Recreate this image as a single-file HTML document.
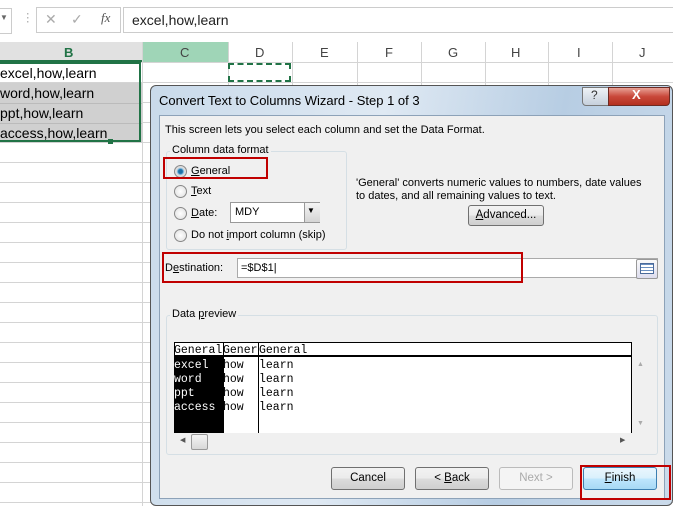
<!DOCTYPE html><html><head><style>
body{margin:0;width:673px;height:506px;overflow:hidden;background:#fff;font-family:"Liberation Sans",sans-serif;position:relative}
.a{position:absolute}
.t{font-size:11.5px;color:#000;white-space:nowrap}
.btn{position:absolute;height:21px;border:1px solid #707070;border-radius:3px;background:linear-gradient(#f2f2f2,#ebebeb 50%,#dcdcdc 51%,#cfcfcf);font-size:11.5px;text-align:center;line-height:21px}
.rad{position:absolute;width:11px;height:11px;border:1px solid #888;border-radius:50%;background:radial-gradient(#fff,#ddd)}
.mono{font-family:"Liberation Mono",monospace;font-size:11.5px;line-height:14px;white-space:pre}
.red{position:absolute;border:2px solid #c00000}
</style></head><body>
<div class="a" style="left:0;top:0;width:673px;height:40px;background:#fff"></div>
<div class="a" style="left:-2px;top:8px;width:12px;height:24px;border:1px solid #ccc;background:#fff"></div>
<div class="a t" style="left:0;top:13px;font-size:8px;color:#666">▼</div>
<div class="a t" style="left:22px;top:10px;color:#aaa">⋮</div>
<div class="a" style="left:36px;top:7px;width:83px;height:24px;border:1px solid #ccc"></div>
<div class="a t" style="left:45px;top:11px;color:#aaa;font-size:14px">✕</div>
<div class="a t" style="left:71px;top:11px;color:#aaa;font-size:14px">✓</div>
<div class="a t" style="left:101px;top:10px;color:#555;font-family:'Liberation Serif',serif;font-style:italic;font-size:13px">fx</div>
<div class="a" style="left:123px;top:7px;width:560px;height:24px;border:1px solid #ccc"></div>
<div class="a t" style="left:132px;top:12px;font-size:14px;color:#222">excel,how,learn</div>
<div class="a" style="left:0;top:42px;width:673px;height:20px;background:#fff;border-bottom:1px solid #d4d4d4"></div>
<div class="a" style="left:0;top:42px;width:142px;height:20px;background:#e1e1e1;border-bottom:2px solid #217346;box-sizing:border-box"></div>
<div class="a" style="left:142px;top:42px;width:86px;height:20px;background:#9fd5b7"></div>
<div class="a t" style="left:64px;top:45px;font-size:13px;font-weight:bold;color:#217346">B</div>
<div class="a t" style="left:180px;top:45px;font-size:13px;color:#444">C</div>
<div class="a t" style="left:255px;top:45px;font-size:13px;color:#444">D</div>
<div class="a t" style="left:320px;top:45px;font-size:13px;color:#444">E</div>
<div class="a t" style="left:385px;top:45px;font-size:13px;color:#444">F</div>
<div class="a t" style="left:448px;top:45px;font-size:13px;color:#444">G</div>
<div class="a t" style="left:511px;top:45px;font-size:13px;color:#444">H</div>
<div class="a t" style="left:577px;top:45px;font-size:13px;color:#444">I</div>
<div class="a t" style="left:639px;top:45px;font-size:13px;color:#444">J</div>
<svg class="a" style="left:0;top:42px" width="673" height="464">
<g stroke="#d4d4d4">
<line x1="142.5" y1="0" x2="142.5" y2="464"/><line x1="228.5" y1="0" x2="228.5" y2="464"/><line x1="292.5" y1="0" x2="292.5" y2="464"/><line x1="357.5" y1="0" x2="357.5" y2="464"/><line x1="421.5" y1="0" x2="421.5" y2="464"/><line x1="485.5" y1="0" x2="485.5" y2="464"/><line x1="548.5" y1="0" x2="548.5" y2="464"/><line x1="612.5" y1="0" x2="612.5" y2="464"/>
<line x1="0" y1="40.5" x2="673" y2="40.5"/><line x1="0" y1="60.5" x2="673" y2="60.5"/><line x1="0" y1="80.5" x2="673" y2="80.5"/><line x1="0" y1="100.5" x2="673" y2="100.5"/><line x1="0" y1="120.5" x2="673" y2="120.5"/><line x1="0" y1="140.5" x2="673" y2="140.5"/><line x1="0" y1="160.5" x2="673" y2="160.5"/><line x1="0" y1="180.5" x2="673" y2="180.5"/><line x1="0" y1="200.5" x2="673" y2="200.5"/><line x1="0" y1="220.5" x2="673" y2="220.5"/><line x1="0" y1="240.5" x2="673" y2="240.5"/><line x1="0" y1="260.5" x2="673" y2="260.5"/><line x1="0" y1="280.5" x2="673" y2="280.5"/><line x1="0" y1="300.5" x2="673" y2="300.5"/><line x1="0" y1="320.5" x2="673" y2="320.5"/><line x1="0" y1="340.5" x2="673" y2="340.5"/><line x1="0" y1="360.5" x2="673" y2="360.5"/><line x1="0" y1="380.5" x2="673" y2="380.5"/><line x1="0" y1="400.5" x2="673" y2="400.5"/><line x1="0" y1="420.5" x2="673" y2="420.5"/><line x1="0" y1="440.5" x2="673" y2="440.5"/><line x1="0" y1="460.5" x2="673" y2="460.5"/>
</g></svg>
<div class="a" style="left:0;top:83px;width:142px;height:60px;background:#d0d0d0"></div>
<div class="a" style="left:0;top:102.5px;width:142px;height:1px;background:#bbb"></div>
<div class="a" style="left:0;top:122.5px;width:142px;height:1px;background:#bbb"></div>
<div class="a" style="left:-2px;top:62px;width:143px;height:80px;border:2px solid #217346;box-sizing:border-box"></div>
<div class="a" style="left:108px;top:139px;width:5px;height:5px;background:#217346"></div>
<div class="a t" style="left:0;top:65px;font-size:14px">excel,how,learn</div>
<div class="a t" style="left:0;top:85px;font-size:14px">word,how,learn</div>
<div class="a t" style="left:0;top:105px;font-size:14px">ppt,how,learn</div>
<div class="a t" style="left:0;top:125px;font-size:14px">access,how,learn</div>
<div class="a" style="left:228px;top:63px;width:63px;height:19px;border:2px dashed #217346;box-sizing:border-box"></div>
<div class="a" style="left:150px;top:85px;width:523px;height:421px;border:1px solid #555;border-radius:6px;box-sizing:border-box;background:linear-gradient(100deg,#c9daea,#dfe9f3 40%,#b7cde3 70%,#cbdbeb)"></div>
<div class="a t" style="left:159px;top:93px;font-size:13px">Convert Text to Columns Wizard - Step 1 of 3</div>
<div class="a" style="left:582px;top:87px;width:26px;height:17px;border:1px solid #777;border-radius:0 0 0 4px;background:linear-gradient(#eef2f6,#c6d0dc)"></div>
<div class="a t" style="left:591px;top:88px;font-size:12px;color:#333">?</div>
<div class="a" style="left:608px;top:87px;width:60px;height:17px;border:1px solid #6d2a22;border-radius:0 0 4px 0;background:linear-gradient(#e8a195,#c9483a 50%,#b3301f)"></div>
<div class="a t" style="left:632px;top:87px;font-size:13px;font-weight:bold;color:#fff">X</div>
<div class="a" style="left:159px;top:115px;width:506px;height:384px;background:#f0f0f0;border:1px solid #8da2b8;box-sizing:border-box"></div>
<div class="a t" style="left:165px;top:124px;font-size:11px">This screen lets you select each column and set the Data Format.</div>
<div class="a" style="left:166px;top:151px;width:179px;height:97px;border:1px solid #d5dfe5;border-radius:3px"></div>
<div class="a t" style="left:170px;top:144px;font-size:11px;background:#f0f0f0;padding:0 2px">Column data format</div>
<div class="rad" style="left:174px;top:165px;background:radial-gradient(#1d6fa5 2px,#7ab8df 3px,#ddd 4px)"></div><div class="a t" style="left:191px;top:165px;font-size:11px"><u>G</u>eneral</div>
<div class="rad" style="left:174px;top:185px"></div><div class="a t" style="left:191px;top:185px;font-size:11px"><u>T</u>ext</div>
<div class="rad" style="left:174px;top:207px"></div><div class="a t" style="left:191px;top:207px;font-size:11px"><u>D</u>ate:</div>
<div class="a" style="left:230px;top:202px;width:90px;height:21px;border:1px solid #999;background:#fff;box-sizing:border-box"></div>
<div class="a t" style="left:235px;top:206px;font-size:11px">MDY</div>
<div class="a" style="left:304px;top:203px;width:15px;height:19px;background:linear-gradient(#f4f4f4,#d5d5d5);border-left:1px solid #999"></div>
<div class="a t" style="left:307px;top:206px;font-size:8px">▼</div>
<div class="rad" style="left:174px;top:229px"></div><div class="a t" style="left:191px;top:229px;font-size:11px">Do not <u>i</u>mport column (skip)</div>
<div class="red" style="left:163px;top:157px;width:101px;height:18px"></div>
<div class="a t" style="left:356px;top:177px;font-size:11px;line-height:13px">'General' converts numeric values to numbers, date values<br>to dates, and all remaining values to text.</div>
<div class="btn" style="left:468px;top:205px;width:74px;height:19px;line-height:19px"><u>A</u>dvanced...</div>
<div class="a t" style="left:165px;top:262px;font-size:11px">D<u>e</u>stination:</div>
<div class="a" style="left:237px;top:258px;width:421px;height:20px;border:1px solid #aaa;background:#fff;box-sizing:border-box"></div>
<div class="a t" style="left:241px;top:262px;font-size:11px">=$D$1|</div>
<div class="a" style="left:636px;top:259px;width:20px;height:18px;border:1px solid #999;border-radius:2px;background:linear-gradient(#fafafa,#dde)"></div>
<div class="a" style="left:640px;top:263px;width:12px;height:9px;background:repeating-linear-gradient(#6a8fc0 0 1px,#fff 1px 3px);border:1px solid #4a6a9a"></div>
<div class="red" style="left:162px;top:252px;width:357px;height:27px"></div>
<div class="a" style="left:166px;top:315px;width:490px;height:138px;border:1px solid #d5dfe5;border-radius:3px"></div>
<div class="a t" style="left:170px;top:308px;font-size:11px;background:#f0f0f0;padding:0 2px">Data <u>p</u>review</div>
<div class="a" style="left:174px;top:342px;width:458px;height:91px;background:#fff;border:1px solid #000;border-bottom:none;box-sizing:border-box"></div>
<div class="a" style="left:174px;top:342px;width:49px;height:91px;background:#000"></div>
<div class="a" style="left:174px;top:342px;width:458px;height:15px;background:#fff;border:1px solid #000;border-bottom:2px solid #000;box-sizing:border-box"></div>
<div class="a" style="left:222.5px;top:342px;width:1px;height:91px;background:#000"></div>
<div class="a" style="left:258px;top:342px;width:1px;height:91px;background:#000"></div>
<div class="a mono" style="left:174px;top:344px">General</div>
<div class="a mono" style="left:223px;top:344px;width:35px;overflow:hidden">General</div>
<div class="a mono" style="left:259px;top:344px">General</div>
<div class="a mono" style="left:174px;top:359px;color:#fff">excel<br>word<br>ppt<br>access</div>
<div class="a mono" style="left:223px;top:359px">how<br>how<br>how<br>how</div>
<div class="a mono" style="left:259px;top:359px">learn<br>learn<br>learn<br>learn</div>
<div class="a t" style="left:637px;top:361px;font-size:7px;color:#aaa">▲</div>
<div class="a t" style="left:637px;top:420px;font-size:7px;color:#aaa">▼</div>
<div class="a t" style="left:180px;top:436px;font-size:7px;color:#555">◀</div>
<div class="a t" style="left:620px;top:436px;font-size:7px;color:#555">▶</div>
<div class="a" style="left:191px;top:434px;width:15px;height:14px;border:1px solid #999;border-radius:2px;background:linear-gradient(#f4f4f4,#d8d8d8)"></div>
<div class="btn" style="left:331px;top:467px;width:72px">Cancel</div>
<div class="btn" style="left:415px;top:467px;width:72px">&lt; <u>B</u>ack</div>
<div class="btn" style="left:499px;top:467px;width:72px;color:#aaa;border-color:#bbb;background:#f4f4f4">Next &gt;</div>
<div class="btn" style="left:583px;top:467px;width:72px;border-color:#3c7fb1;background:linear-gradient(#eaf6fd,#d9f0fc 50%,#bee6fd 51%,#a7d9f5)"><u>F</u>inish</div>
<div class="red" style="left:580px;top:465px;width:87px;height:31px"></div>
</body></html>
